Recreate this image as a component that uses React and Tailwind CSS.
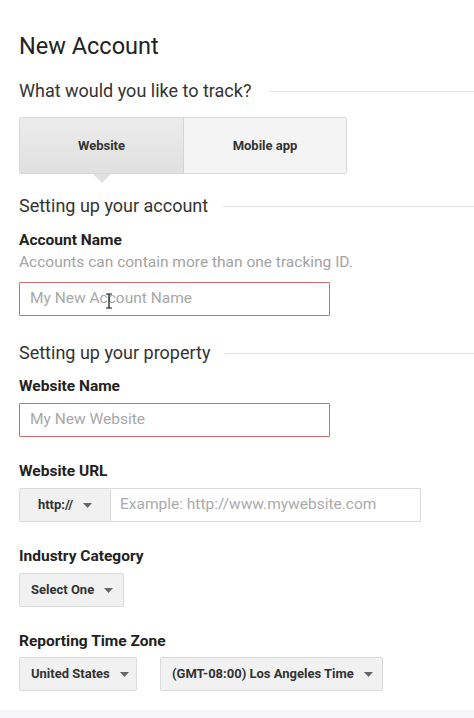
import React from 'react'

function Caret() {
  return (
    <svg width="9" height="5" viewBox="0 0 9 5" className="ml-[10px] shrink-0">
      <path d="M0 0h9L4.5 5z" fill="#666" />
    </svg>
  )
}

function SectionTitle({ children, gap }) {
  return (
    <div className="flex items-center">
      <h2 className="text-[18px] leading-[24px] text-[#333] whitespace-nowrap">{children}</h2>
      <div className={`flex-1 h-px bg-[#e2e2e2] ${gap}`} />
    </div>
  )
}

function Label({ children, className = '' }) {
  return <p className={`text-[15.5px] leading-[20px] font-bold text-[#222] ${className}`}>{children}</p>
}

function Select({ children, className = '' }) {
  return (
    <div className={`flex items-center h-[34px] pl-[11px] pr-[10px] bg-[#f1f1f1] border border-[#dadada] rounded-[2px] text-[13px] font-bold text-[#333] whitespace-nowrap ${className}`}>
      {children}
      <Caret />
    </div>
  )
}

export default function App() {
  return (
    <div className="bg-white min-h-[718px] font-['Roboto',sans-serif] flex flex-col">
      <div className="pl-[19px] flex-1">
        <h1 className="mt-[32px] text-[23.5px] leading-[28px] text-[#222]">New Account</h1>

        <div className="mt-[19px]">
          <SectionTitle gap="ml-[18px]">What would you like to track?</SectionTitle>
        </div>

        {/* tabs */}
        <div className="relative mt-[14px] flex w-[328px] h-[57px] border border-[#d8d8d8] rounded-[2px] text-[13px] font-bold text-[#333]">
          <div className="w-[164px] flex items-center justify-center bg-gradient-to-b from-[#ececec] to-[#e0e0e0] border-r border-[#d4d4d4]">
            Website
          </div>
          <div className="flex-1 flex items-center justify-center bg-[#f4f4f4]">Mobile app</div>
          <svg width="18" height="9" viewBox="0 0 18 9" className="absolute left-[73px] top-[56px]">
            <path d="M0 0h18L9 9z" fill="#e0e0e0" />
          </svg>
        </div>

        <div className="mt-[20px]">
          <SectionTitle gap="ml-[15px]">Setting up your account</SectionTitle>
        </div>

        <Label className="mt-[12px]">Account Name</Label>
        <p className="mt-[2px] text-[15.5px] leading-[20px] text-[#a3a3a3]">Accounts can contain more than one tracking ID.</p>
        <div className="relative mt-[10px] w-[311px] h-[34px] border border-[#d06e6e] rounded-[1px] flex items-center px-[10px] text-[15.5px] text-[#a8a8a8]">
          My New Account Name
          <svg width="8" height="16" viewBox="0 0 8 16" className="absolute left-[85px] top-[10px]">
            <path d="M1 1h2.2c.5 0 .8.4.8.8M7 1H4.8c-.5 0-.8.4-.8.8v12.4c0 .4-.3.8-.8.8H1M4 14.2c0 .4.3.8.8.8H7" stroke="#111" strokeWidth="1.2" fill="none" />
          </svg>
        </div>

        <div className="mt-[25px]">
          <SectionTitle gap="ml-[15px]">Setting up your property</SectionTitle>
        </div>

        <Label className="mt-[11px]">Website Name</Label>
        <div className="mt-[7px] w-[311px] h-[34px] border border-[#d06e6e] rounded-[1px] flex items-center px-[10px] text-[15.5px] text-[#a8a8a8]">
          My New Website
        </div>

        <Label className="mt-[24px]">Website URL</Label>
        <div className="mt-[7px] flex h-[34px] w-[402px]">
          <div className="w-[92px] flex items-center justify-center bg-[#f1f1f1] border border-[#dadada] rounded-l-[2px] text-[13px] font-bold text-[#333]">
            http://
            <Caret />
          </div>
          <div className="flex-1 flex items-center px-[9px] border border-l-0 border-[#dadada] text-[15.5px] text-[#aaa] whitespace-nowrap">
            Example: http://www.mywebsite.com
          </div>
        </div>

        <Label className="mt-[24px]">Industry Category</Label>
        <Select className="mt-[7px] w-fit">Select One</Select>

        <Label className="mt-[24px]">Reporting Time Zone</Label>
        <div className="mt-[6px] flex gap-[23px]">
          <Select className="w-[118px]">United States</Select>
          <Select className="w-[223px]">(GMT-08:00) Los Angeles Time</Select>
        </div>
      </div>
      <div className="h-[8px] bg-[#f5f5fa]" />
    </div>
  )
}
